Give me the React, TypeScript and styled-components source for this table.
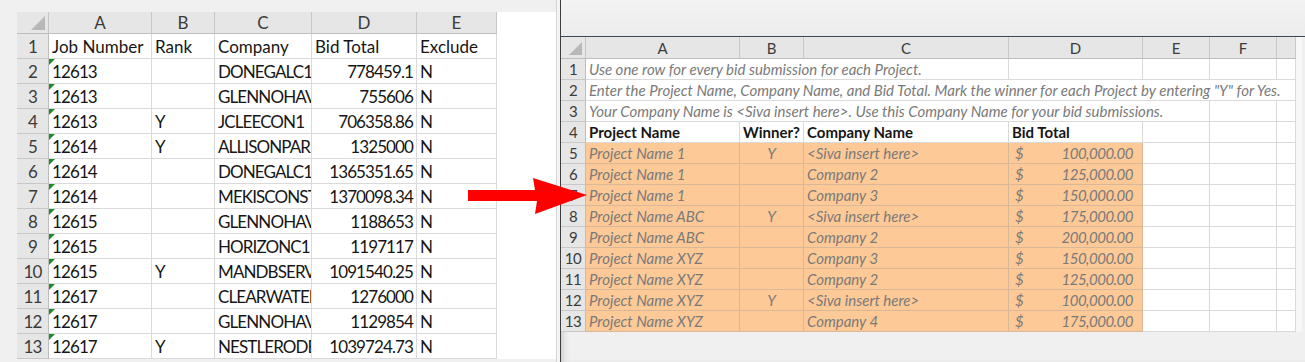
import React from "react";
import styled, { createGlobalStyle, css } from "styled-components";

const Global = createGlobalStyle`
  html, body { margin: 0; padding: 0; background: #f0f0f0; }
  body { width: 1305px; height: 362px; overflow: hidden; }
`;

const Page = styled.div`
  position: relative;
  display: flex;
  width: 1305px;
  height: 362px;
  background: #f0f0f0;
  overflow: hidden;
`;

const LeftPane = styled.div`
  width: 557px;
  padding: 12px 0 0 17px;
  box-sizing: border-box;
  border-right: 1px solid #d6d6d6;
  background: #f0f0f0;
`;

const Gap = styled.div`
  width: 3px;
  background: #f4f4f4;
`;

const RightPane = styled.div`
  flex: 1;
  display: flex;
  flex-direction: column;
  border-left: 1px solid #3e3e3e;
  background: #f0f0f0;
  box-shadow: inset 6px 0 8px -6px rgba(0, 0, 0, 0.25);
`;

const TopBar = styled.div`
  height: 36px;
  border-bottom: 1px solid #3d4752;
  background: linear-gradient(#f3f3f3, #ececec);
`;

const SheetRow = styled.div`
  display: flex;
`;

const ScrollStrip = styled.div`
  width: 6px;
  height: 295px;
  background: #f7f7f7;
`;

const Grid = styled.div<{ $cols: string; $rows: string; $font: number }>`
  display: grid;
  grid-template-columns: ${(p) => p.$cols};
  grid-template-rows: ${(p) => p.$rows};
  font-family: Lato, "Open Sans", sans-serif;
  font-size: ${(p) => p.$font}px;
  background: #ffffff;
`;

const Corner = styled.div<{ $size: number }>`
  position: relative;
  background: #e6e6e6;
  border-right: 1px solid #c6c6c6;
  border-bottom: 1px solid #bdbdbd;
  box-sizing: border-box;
  &::after {
    content: "";
    position: absolute;
    right: 3px;
    bottom: 3px;
    width: 0;
    height: 0;
    border-left: ${(p) => p.$size}px solid transparent;
    border-bottom: ${(p) => p.$size}px solid #b8b8b8;
  }
`;

const ColHead = styled.div`
  display: flex;
  align-items: center;
  justify-content: center;
  background: #e6e6e6;
  color: #3c3c3c;
  border-right: 1px solid #c8c8c8;
  border-bottom: 1px solid #bdbdbd;
  box-sizing: border-box;
`;

const RowHead = styled.div<{ $tight: number }>`
  display: flex;
  align-items: center;
  justify-content: center;
  background: #e6e6e6;
  color: #3c3c3c;
  letter-spacing: ${(p) => p.$tight}px;
  border-right: 1px solid #bdbdbd;
  border-bottom: 1px solid #c8c8c8;
  box-sizing: border-box;
`;

type CellProps = {
  $align?: "left" | "center" | "right";
  $fill?: boolean;
  $italic?: boolean;
  $bold?: boolean;
  $span?: number;
  $flag?: boolean;
  $muted?: boolean;
  $num?: boolean;
  $caps?: boolean;
};

const Cell = styled.div<CellProps>`
  position: relative;
  display: flex;
  align-items: center;
  justify-content: ${(p) =>
    p.$align === "right" ? "flex-end" : p.$align === "center" ? "center" : "flex-start"};
  padding: 0 3px;
  box-sizing: border-box;
  white-space: nowrap;
  overflow: hidden;
  letter-spacing: ${(p) => (p.$num ? "-0.9px" : p.$caps ? "-0.9px" : "normal")};
  color: ${(p) => (p.$muted ? "#7a7a7a" : "#161616")};
  font-style: ${(p) => (p.$italic ? "italic" : "normal")};
  font-weight: ${(p) => (p.$bold ? 700 : 400)};
  background: ${(p) => (p.$fill ? "#fdc997" : "#ffffff")};
  border-right: 1px solid ${(p) => (p.$fill ? "#d8b898" : "#dadada")};
  border-bottom: 1px solid ${(p) => (p.$fill ? "#d8b898" : "#dadada")};
  ${(p) => p.$span && css`grid-column: span ${p.$span};`}
  ${(p) =>
    p.$flag &&
    css`
      &::before {
        content: "";
        position: absolute;
        top: 0;
        left: 0;
        border-top: 6px solid #1f8a2a;
        border-right: 6px solid transparent;
      }
    `}
`;

const Money = styled.div`
  display: flex;
  justify-content: space-between;
  width: 100%;
  padding: 0 6px 0 3px;
  letter-spacing: -0.5px;
`;

const Arrow = styled.svg`
  position: absolute;
  left: 466px;
  top: 176px;
`;

const leftHeader = ["A", "B", "C", "D", "E"];
const leftRows: [string, string, string, string, string][] = [
  ["12613", "", "DONEGALC1", "778459.1", "N"],
  ["12613", "", "GLENNOHAVEN1", "755606", "N"],
  ["12613", "Y", "JCLEECON1", "706358.86", "N"],
  ["12614", "Y", "ALLISONPARK1", "1325000", "N"],
  ["12614", "", "DONEGALC1", "1365351.65", "N"],
  ["12614", "", "MEKISCONST1", "1370098.34", "N"],
  ["12615", "", "GLENNOHAVEN1", "1188653", "N"],
  ["12615", "", "HORIZONC1", "1197117", "N"],
  ["12615", "Y", "MANDBSERV1", "1091540.25", "N"],
  ["12617", "", "CLEARWATER1", "1276000", "N"],
  ["12617", "", "GLENNOHAVEN1", "1129854", "N"],
  ["12617", "Y", "NESTLERODE1", "1039724.73", "N"],
];

const rightHeader = ["A", "B", "C", "D", "E", "F", ""];
const bids: [string, string, string, string][] = [
  ["Project Name 1", "Y", "<Siva insert here>", "100,000.00"],
  ["Project Name 1", "", "Company 2", "125,000.00"],
  ["Project Name 1", "", "Company 3", "150,000.00"],
  ["Project Name ABC", "Y", "<Siva insert here>", "175,000.00"],
  ["Project Name ABC", "", "Company 2", "200,000.00"],
  ["Project Name XYZ", "", "Company 3", "150,000.00"],
  ["Project Name XYZ", "", "Company 2", "125,000.00"],
  ["Project Name XYZ", "Y", "<Siva insert here>", "100,000.00"],
  ["Project Name XYZ", "", "Company 4", "175,000.00"],
];

function LeftSheet() {
  return (
    <Grid
      $cols="32px 103px 63px 97px 105px 80px"
      $rows="22px repeat(13, 25px)"
      $font={17}
    >
      <Corner $size={14} />
      {leftHeader.map((h) => (
        <ColHead key={h}>{h}</ColHead>
      ))}
      <RowHead $tight={-0.8}>1</RowHead>
      <Cell>Job Number</Cell>
      <Cell>Rank</Cell>
      <Cell>Company</Cell>
      <Cell>Bid Total</Cell>
      <Cell>Exclude</Cell>
      {leftRows.map((r, i) => (
        <React.Fragment key={i}>
          <RowHead $tight={-0.8}>{i + 2}</RowHead>
          <Cell $flag $num>{r[0]}</Cell>
          <Cell>{r[1]}</Cell>
          <Cell $caps>{r[2]}</Cell>
          <Cell $align="right" $num>{r[3]}</Cell>
          <Cell>{r[4]}</Cell>
        </React.Fragment>
      ))}
    </Grid>
  );
}

function RightSheet() {
  return (
    <Grid
      $cols="25px 154px 64px 205px 134px 67px 67px 19px"
      $rows="22px repeat(13, 21px)"
      $font={15}
    >
      <Corner $size={13} />
      {rightHeader.map((h, i) => (
        <ColHead key={i}>{h}</ColHead>
      ))}

      <RowHead $tight={-0.5}>1</RowHead>
      <Cell $span={3} $italic $muted>
        Use one row for every bid submission for each Project.
      </Cell>
      <Cell />
      <Cell />
      <Cell />
      <Cell />

      <RowHead $tight={-0.5}>2</RowHead>
      <Cell $span={7} $italic $muted>
        Enter the Project Name, Company Name, and Bid Total. Mark the winner for each Project by
        entering "Y" for Yes.
      </Cell>

      <RowHead $tight={-0.5}>3</RowHead>
      <Cell $span={5} $italic $muted>
        Your Company Name is &lt;Siva insert here&gt;. Use this Company Name for your bid
        submissions.
      </Cell>
      <Cell />
      <Cell />

      <RowHead $tight={-0.5}>4</RowHead>
      <Cell $bold>Project Name</Cell>
      <Cell $bold $align="center">Winner?</Cell>
      <Cell $bold>Company Name</Cell>
      <Cell $bold>Bid Total</Cell>
      <Cell />
      <Cell />
      <Cell />

      {bids.map((b, i) => (
        <React.Fragment key={i}>
          <RowHead $tight={-0.5}>{i + 5}</RowHead>
          <Cell $fill $italic $muted>{b[0]}</Cell>
          <Cell $fill $italic $muted $align="center">{b[1]}</Cell>
          <Cell $fill $italic $muted>{b[2]}</Cell>
          <Cell $fill $italic $muted>
            <Money>
              <span>$</span>
              <span>{b[3]}</span>
            </Money>
          </Cell>
          <Cell />
          <Cell />
          <Cell />
        </React.Fragment>
      ))}
    </Grid>
  );
}

export default function App() {
  return (
    <Page>
      <Global />
      <LeftPane>
        <LeftSheet />
      </LeftPane>
      <Gap />
      <RightPane>
        <TopBar />
        <SheetRow>
          <RightSheet />
          <ScrollStrip />
        </SheetRow>
      </RightPane>
      <Arrow width="124" height="40" viewBox="0 0 124 40">
        <polygon
          points="2,14 69,14 67,2 121,19 69,38 71,25 2,25"
          fill="#ff0000"
        />
      </Arrow>
    </Page>
  );
}
